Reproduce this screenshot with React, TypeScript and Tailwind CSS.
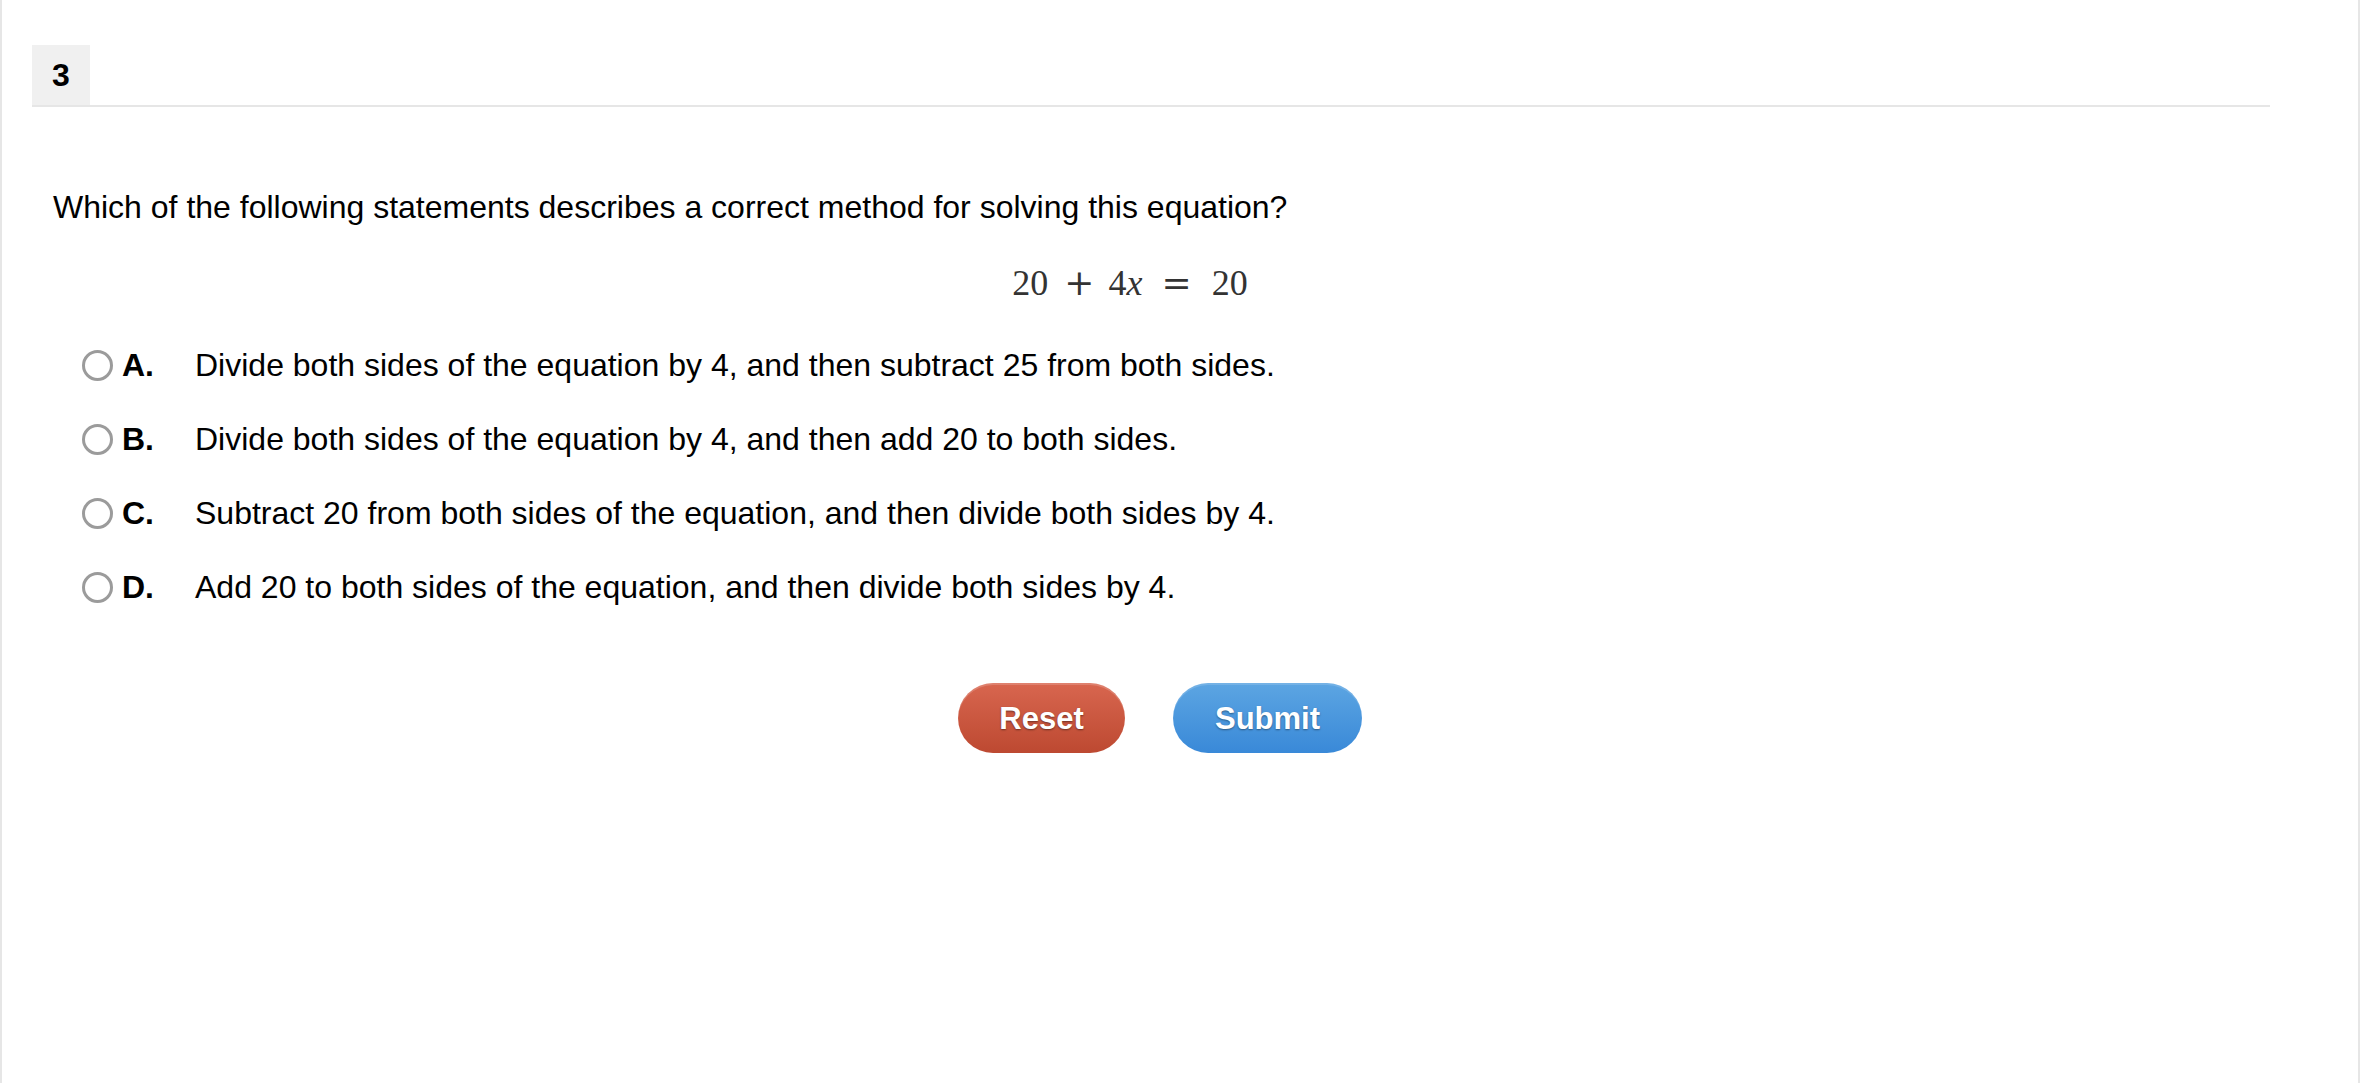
import React from "react";

const options = [
  { letter: "A.", text: "Divide both sides of the equation by 4, and then subtract 25 from both sides." },
  { letter: "B.", text: "Divide both sides of the equation by 4, and then add 20 to both sides." },
  { letter: "C.", text: "Subtract 20 from both sides of the equation, and then divide both sides by 4." },
  { letter: "D.", text: "Add 20 to both sides of the equation, and then divide both sides by 4." },
];

function Equation() {
  // 20 + 4x = 20, set like a MathJax line
  return (
    <div className="flex justify-center pr-[42px] mt-[35px]">
      <div className="font-['Liberation_Serif',serif] text-[36px] leading-[44px] text-[#333]">
        <span>20</span>
        <span className="font-['DejaVu_Serif',serif] ml-[16px] mr-[14px]">+</span>
        <span>4</span>
        <span className="italic">x</span>
        <span className="font-['DejaVu_Serif',serif] ml-[19px] mr-[20px]">=</span>
        <span>20</span>
      </div>
    </div>
  );
}

function Option({ letter, text }: { letter: string; text: string }) {
  return (
    <label className="flex items-center h-[74px] cursor-pointer">
      <span className="w-[31px] h-[31px] rounded-full border-[3px] border-[#9b9b9b] bg-white shrink-0" />
      <span className="ml-[9px] w-[73px] font-bold">{letter}</span>
      <span>{text}</span>
    </label>
  );
}

export default function App() {
  return (
    <div className="h-[1083px] bg-white border-x-2 border-[#e6e6e6] font-['Liberation_Sans',Arial,sans-serif] text-black overflow-hidden">
      <div className="ml-[30px] mr-[88px] pt-[45px]">
        <div className="flex border-b-2 border-[#e6e6e6]">
          <div className="w-[58px] h-[60px] bg-[#f0f0f0] flex items-center justify-center text-[32px] font-bold">
            3
          </div>
        </div>

        <div className="text-[32px] leading-[37px]">
          <p className="mt-[82px] pl-[21px]">
            Which of the following statements describes a correct method for solving this equation?
          </p>

          <Equation />

          <div className="mt-[23px] pl-[50px]">
            {options.map((o) => (
              <Option key={o.letter} letter={o.letter} text={o.text} />
            ))}
          </div>

          <div className="flex justify-center gap-[48px] pl-[18px] mt-[59px]">
            <button className="w-[167px] h-[70px] rounded-full bg-linear-to-b from-[#d8664f] to-[#bd4931] shadow-[inset_0_2px_0_rgba(255,255,255,0.18)] text-white font-bold text-[31px] [text-shadow:0_1px_2px_rgba(0,0,0,0.45)]">
              Reset
            </button>
            <button className="w-[189px] h-[70px] rounded-full bg-linear-to-b from-[#5ca5e2] to-[#3989d8] shadow-[inset_0_2px_0_rgba(255,255,255,0.15)] text-white font-bold text-[31px] [text-shadow:0_1px_2px_rgba(0,0,0,0.4)]">
              Submit
            </button>
          </div>
        </div>
      </div>
    </div>
  );
}
